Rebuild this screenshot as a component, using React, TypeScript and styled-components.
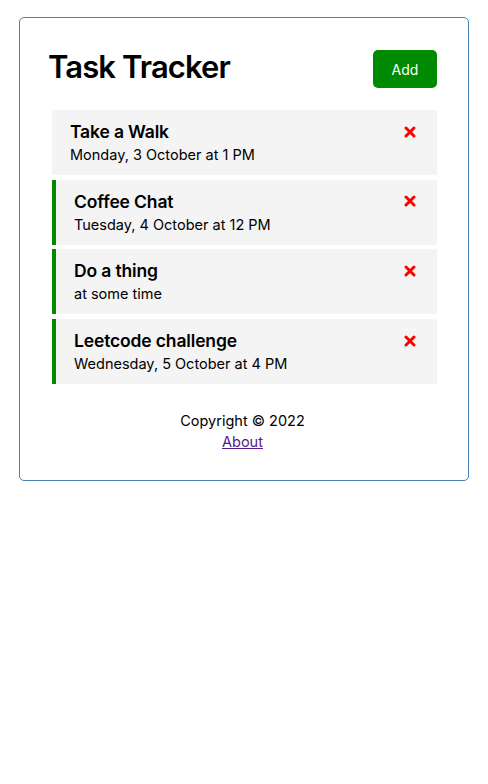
import React from "react";
import styled, { createGlobalStyle } from "styled-components";

const Global = createGlobalStyle`
  * { box-sizing: border-box; }
  body { margin: 0; font-family: Inter, "Noto Sans", sans-serif; background: #fff; color: #000; }
`;

const Container = styled.div`
  width: 450px;
  margin: 17px 19px;
  border: 1px solid steelblue;
  border-radius: 5px;
  padding: 32px 31px 28px 28px;
`;

const Header = styled.header`
  display: flex;
  justify-content: space-between;
  align-items: center;
  height: 38px;
  margin-bottom: 22px;
`;

const Title = styled.h1`
  margin: 0 0 4px;
  font-size: 31px;
  line-height: 34px;
  font-weight: 600;
  letter-spacing: -0.9px;
`;

const Button = styled.button`
  background: #008a00;
  color: #fff;
  border: none;
  border-radius: 5px;
  width: 64px;
  height: 38px;
  font-family: inherit;
  font-size: 14px;
  cursor: pointer;
`;

const List = styled.div`
  display: flex;
  flex-direction: column;
  gap: 4.7px;
  padding-left: 4px;
`;

const Task = styled.div<{ $reminder: boolean }>`
  background: #f4f4f4;
  padding: 9px 21px 10px 18px;
  border-left: ${(p) => (p.$reminder ? "4px solid #008a00" : "none")};
  height: 65px;
`;

const TaskTitle = styled.h3`
  margin: 0;
  display: flex;
  justify-content: space-between;
  align-items: center;
  font-size: 17.5px;
  font-weight: 600;
  line-height: 25px;
  letter-spacing: -0.15px;
`;

const TaskDate = styled.p`
  margin: 0;
  font-size: 14.5px;
  line-height: 21px;
`;

const Footer = styled.footer`
  margin-top: 26px;
  text-align: center;
  font-size: 14.5px;
  line-height: 21px;
`;

const Link = styled.a`
  color: #551a8b;
`;

const Times = () => (
  <svg width="12" height="12" viewBox="0 0 12 12">
    <path d="M2 2 L10 10 M10 2 L2 10" stroke="#ff0000" strokeWidth="3" strokeLinecap="round" />
  </svg>
);

const tasks = [
  { text: "Take a Walk", day: "Monday, 3 October at 1 PM", reminder: false },
  { text: "Coffee Chat", day: "Tuesday, 4 October at 12 PM", reminder: true },
  { text: "Do a thing", day: "at some time", reminder: true },
  { text: "Leetcode challenge", day: "Wednesday, 5 October at 4 PM", reminder: true },
];

export default function App() {
  return (
    <>
      <Global />
      <Container>
        <Header>
          <Title>Task Tracker</Title>
          <Button>Add</Button>
        </Header>
        <List>
          {tasks.map((t) => (
            <Task key={t.text} $reminder={t.reminder}>
              <TaskTitle>
                {t.text}
                <Times />
              </TaskTitle>
              <TaskDate>{t.day}</TaskDate>
            </Task>
          ))}
        </List>
        <Footer>
          <div>Copyright © 2022</div>
          <Link href="#">About</Link>
        </Footer>
      </Container>
    </>
  );
}
